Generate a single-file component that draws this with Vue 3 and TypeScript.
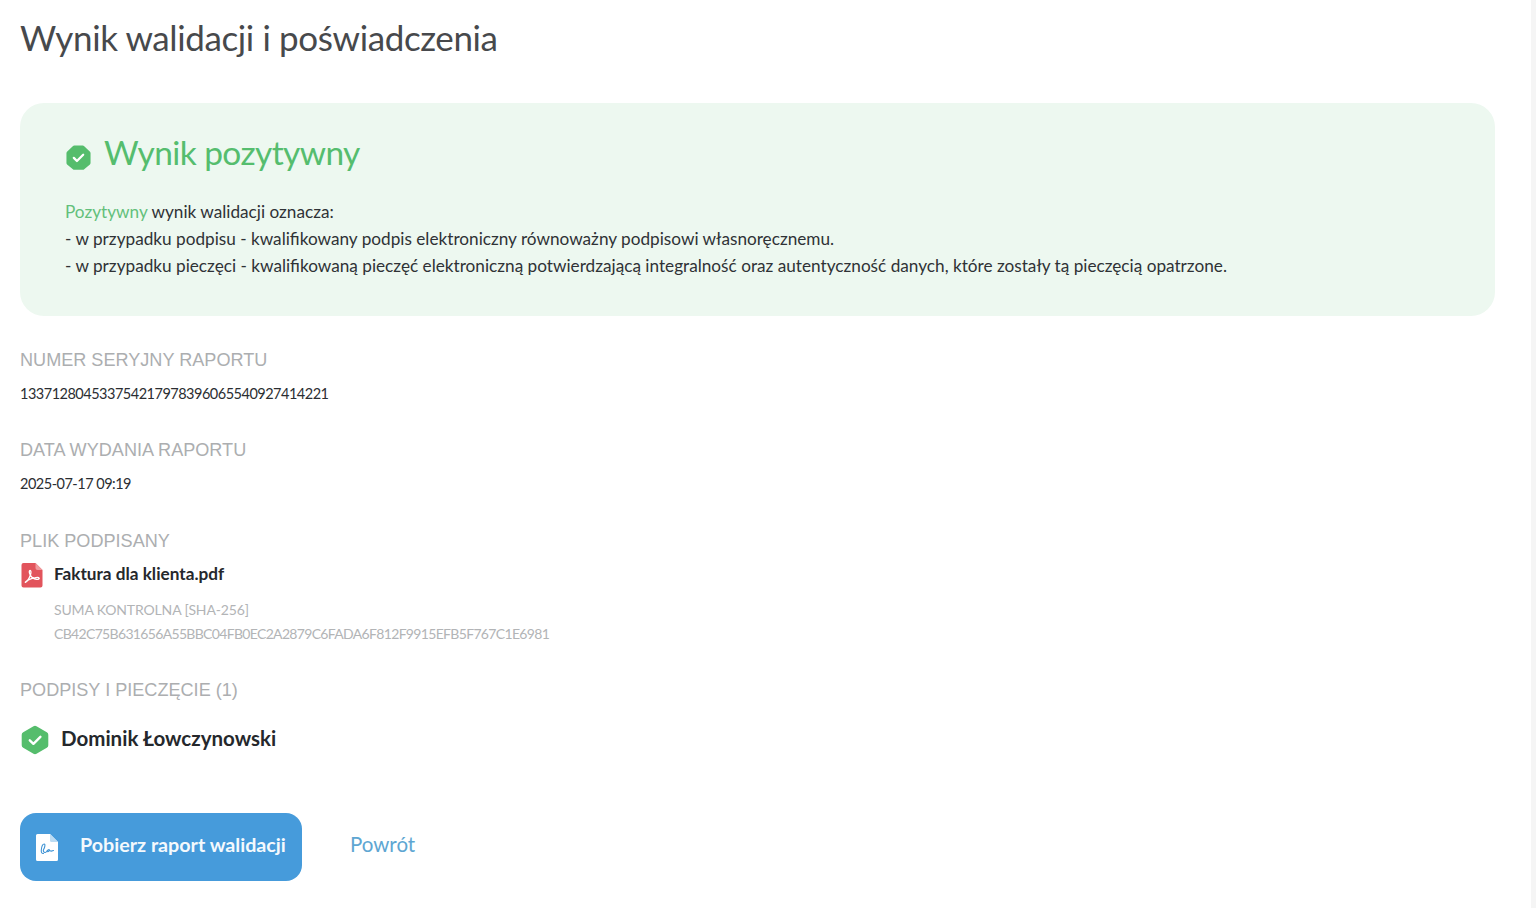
<script setup lang="ts">
const serial = '133712804533754217978396065540927414221'
const hash = 'CB42C75B631656A55BBC04FB0EC2A2879C6FADA6F812F9915EFB5F767C1E6981'
</script>

<template>
  <div class="page">
    <main class="content">
      <h1 class="title">Wynik walidacji i poświadczenia</h1>

      <section class="result">
        <h2 class="result-head">
          <svg class="result-icon" viewBox="0 0 26 26" aria-hidden="true">
            <path d="M9 1.500h8a2 2 0 0 1 1.500.7l5.600 5.200a2 2 0 0 1 .5 1.300v9.600a2 2 0 0 1-.6 1.400l-5.500 4.600a2 2 0 0 1-1.400.6H9a2 2 0 0 1-1.400-.6l-5.600-4.600a2 2 0 0 1-.6-1.400V8.700a2 2 0 0 1 .5-1.300l5.600-5.200A2 2 0 0 1 9 1.500z" fill="#55bd6c" />
            <path d="M8.500 13.400l3 3 6-6" fill="none" stroke="#fff" stroke-width="2.200" stroke-linecap="round" stroke-linejoin="round" />
          </svg>
          <span>Wynik pozytywny</span>
        </h2>
        <p class="result-text">
          <span class="green">Pozytywny</span> wynik walidacji oznacza:<br />
          - w przypadku podpisu - kwalifikowany podpis elektroniczny równoważny podpisowi własnoręcznemu.<br />
          - w przypadku pieczęci - kwalifikowaną pieczęć elektroniczną potwierdzającą integralność oraz autentyczność danych, które zostały tą pieczęcią opatrzone.
        </p>
      </section>

      <section class="field field-serial">
        <h3 class="label">NUMER SERYJNY RAPORTU</h3>
        <p class="value">{{ serial }}</p>
      </section>

      <section class="field field-date">
        <h3 class="label">DATA WYDANIA RAPORTU</h3>
        <p class="value">2025-07-17 09:19</p>
      </section>

      <section class="field field-file">
        <h3 class="label">PLIK PODPISANY</h3>
        <div class="file-row">
          <svg class="pdf-icon" viewBox="0 0 22 26" aria-hidden="true">
            <path d="M2.500 1h12L21.500 8v15.500a2 2 0 0 1-2 2h-17a2 2 0 0 1-2-2V3a2 2 0 0 1 2-2z" fill="#e2545c" />
            <path d="M14.500 1v5a2 2 0 0 0 2 2h5z" fill="#f09a9e" />
            <path d="M4.300 20.300c2.300-1.200 4.300-4.600 5.400-8.300.5-1.800.3-3.500-.6-3.500-1 0-1 1.900-.3 3.500 1.300 3 3.600 5 6.700 5.300 1.700.2 3-.3 2.700-1.100-.4-.9-2.500-.8-4.700-.3-3.500.7-7.300 2.300-9.200 4.400z" fill="none" stroke="#fff" stroke-width="1.300" stroke-linejoin="round" />
          </svg>
          <span class="file-name">Faktura dla klienta.pdf</span>
        </div>
        <div class="hash">
          <div class="hash-label">SUMA KONTROLNA [SHA-256]</div>
          <div class="hash-value">{{ hash }}</div>
        </div>
      </section>

      <section class="field field-sign">
        <h3 class="label">PODPISY I PIECZĘCIE (1)</h3>
        <div class="signer">
          <svg class="signer-icon" viewBox="0 0 28 30" aria-hidden="true">
            <path d="M12.500 1.200a3 3 0 0 1 3 0l10.300 6a3 3 0 0 1 1.500 2.600v10.400a3 3 0 0 1-1.500 2.600l-10.300 6a3 3 0 0 1-3 0l-10.300-6A3 3 0 0 1 .7 20.200V9.800a3 3 0 0 1 1.500-2.600z" fill="#55bd6c" />
            <path d="M8.800 15.300l3.600 3.500 7-7" fill="none" stroke="#fff" stroke-width="2.400" stroke-linecap="round" stroke-linejoin="round" />
          </svg>
          <span class="signer-name">Dominik Łowczynowski</span>
        </div>
      </section>

      <div class="actions">
        <button class="primary" type="button">
          <svg class="doc-icon" viewBox="0 0 22 27" aria-hidden="true">
            <path d="M1.500 0h12.500L22 8v17.500a1.500 1.500 0 0 1-1.500 1.500h-19A1.500 1.500 0 0 1 0 25.500v-24A1.500 1.500 0 0 1 1.500 0z" fill="#fff" />
            <path d="M14 0v6.500A1.500 1.500 0 0 0 15.500 8H22z" fill="#bcdcf3" />
            <path d="M7.500 19.500C6 19.800 5 18.500 5.300 16c.3-3 1.500-6 2.900-6 1.200 0 .8 3-.6 5.500-.7 1.300 0 3.200 1.600 3 1.500-.2 2-2.300 3.300-2.800 1-.3 1.300.7.500 1.500-.8.800-2 .7-2-.1 0-.7 1.800-1.900 2.700-.8.500.7.800 1 1.500.8l2.300-.6" fill="none" stroke="#3f93d4" stroke-width="1.100" stroke-linecap="round" stroke-linejoin="round" />
          </svg>
          <span class="primary-text">Pobierz raport walidacji</span>
        </button>
        <a class="back" href="#">Powrót</a>
      </div>
    </main>
    <div class="scrollbar"></div>
  </div>
</template>

<style>
html, body { margin: 0; background: #fff; }
</style>

<style scoped>
.page {
  display: flex;
  height: 908px;
  overflow: hidden;
  background: #fff;
  font-family: Lato, "Noto Sans", sans-serif;
  color: #25282c;
}
.content {
  flex: 1;
  min-width: 0;
  padding: 16px 36px 0 20px;
}
.scrollbar {
  width: 5px;
  background: #f5f5f5;
}
.title {
  margin: 0;
  font-size: 35px;
  line-height: 42px;
  letter-spacing: -0.38px;
  font-weight: 400;
  color: #47494c;
}
.result {
  margin-top: 45px;
  height: 213px;
  box-sizing: border-box;
  padding: 28px 45px 0;
  background: #edf8f0;
  border-radius: 24px;
}
.result-head {
  display: flex;
  align-items: center;
  gap: 12px;
  margin: 0;
  height: 42px;
  font-size: 33.500px;
  letter-spacing: -0.6px;
  font-weight: 400;
  color: #55bd6e;
}
.result-icon { width: 27px; height: 27px; flex: none; margin-top: 11px; }
.result-text {
  margin: 25px 0 0;
  font-size: 17.200px;
  line-height: 27px;
  color: #2f3236;
}
.green { color: #63c07b; }
.field { margin: 0; }
.field-serial { margin-top: 32px; }
.field-date { margin-top: 32px; }
.field-file { margin-top: 33px; }
.field-sign { margin-top: 32px; }
.label {
  margin: 0;
  font-family: "Liberation Sans", Arial, sans-serif;
  font-size: 18.100px;
  line-height: 24px;
  font-weight: 400;
  color: #acaeb0;
}
.value {
  margin: 10px 0 0;
  font-size: 14.500px;
  letter-spacing: -0.5px;
  line-height: 24px;
  color: #2b2e32;
}
.file-row {
  display: flex;
  align-items: center;
  gap: 12px;
  margin-top: 7px;
  height: 26px;
}
.pdf-icon { width: 22px; height: 26px; flex: none; margin-left: 1px; margin-right: -1px; margin-top: 3px; }
.file-name {
  font-size: 17.200px;
  font-weight: 700;
  color: #25282c;
}
.hash {
  margin: 12px 0 0 34px;
  font-size: 14px;
  line-height: 24px;
  color: #b2b4b6;
}
.hash-label { letter-spacing: -0.15px; }
.hash-value { letter-spacing: -0.67px; }
.signer {
  display: flex;
  align-items: center;
  gap: 12px;
  margin-top: 20px;
  height: 30px;
}
.signer-icon { width: 28px; height: 30px; flex: none; margin-left: 1px; margin-top: 6px; }
.signer-name {
  margin-top: 2px;
  font-size: 20.500px;
  font-weight: 700;
  color: #25282c;
}
.actions {
  display: flex;
  align-items: center;
  gap: 48px;
  margin-top: 61px;
}
.primary {
  display: flex;
  align-items: center;
  gap: 22px;
  width: 282px;
  height: 68px;
  padding: 0 0 0 16px;
  border: 0;
  border-radius: 16px;
  background: #469bdb;
  color: #f4f9fd;
  font-family: Lato, "Noto Sans", sans-serif;
  font-size: 19.700px;
  font-weight: 700;
}
.primary-text { margin-bottom: 6px; }
.doc-icon { width: 22px; height: 27px; flex: none; }
.back {
  margin-bottom: 6px;
  font-size: 20.500px;
  color: #5ea6d2;
  text-decoration: none;
}
</style>
